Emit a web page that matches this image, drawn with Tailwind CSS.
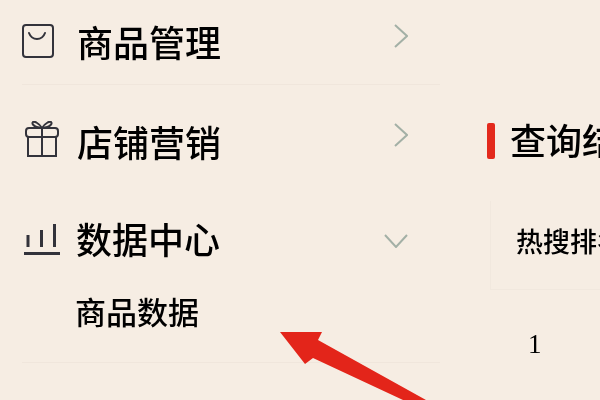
<!DOCTYPE html>
<html lang="zh-CN">
<head>
    <meta charset="UTF-8">
    <title>商品数据</title>
    <script src="https://cdn.jsdelivr.net/npm/@tailwindcss/browser@4"></script>
</head>
<body class="w-[600px] h-[400px] overflow-hidden bg-[#f6ede3]">
    <div class="relative flex w-[600px] h-[400px] overflow-hidden blur-[0.4px] text-black font-medium font-['Liberation_Sans','Noto_Sans_CJK_SC',sans-serif]">
        <!-- 侧边菜单 -->
        <div class="w-[440px] shrink-0 pl-[22px]">
            <div class="flex items-center h-[85px] border-b border-[#f0e6dc]">
                <svg class="w-[32px] h-[34px] mr-[23px] -mt-[3px]" viewBox="0 0 32 34" fill="none" stroke="#33333b" stroke-width="2">
                    <rect x="1" y="1" width="30" height="32" rx="3"/>
                    <path d="M7 9c1.500 4 4 6 8 6s6.500-2 8-6" stroke-linecap="round"/>
                </svg>
                <span class="text-[36px] leading-none pt-[6px]">商品管理</span>
                <svg class="w-[14px] h-[24px] ml-[173px] -mt-[13px]" viewBox="0 0 14 24" fill="none" stroke="#a3b0a6" stroke-width="2"><path d="M1 1l12 11L1 23"/></svg>
            </div>
            <div class="flex items-center h-[113px] pt-[2px]">
                <svg class="w-[34px] h-[36px] ml-[3px] mr-[18px] -mt-[7px]" viewBox="0 0 34 36" fill="none" stroke="#33333b" stroke-width="2">
                    <rect x="1" y="7" width="32" height="9" rx="3"/>
                    <path d="M3 16v19h28V16M17 7v28M17 7C14 2 9 0 8 1s-1 5 9 6c10-1 10-5 9-6s-6 1-9 6"/>
                </svg>
                <span class="text-[36px] leading-none pt-[4px]">店铺营销</span>
                <svg class="w-[14px] h-[24px] ml-[173px] -mt-[15px]" viewBox="0 0 14 24" fill="none" stroke="#a3b0a6" stroke-width="2"><path d="M1 1l12 11L1 23"/></svg>
            </div>
            <div class="flex items-center h-[86px]">
                <svg class="w-[36px] h-[31px] ml-[2px] mr-[16px] -mt-[4px]" viewBox="0 0 36 31" fill="none" stroke="#33333b" stroke-width="3">
                    <path d="M0 29.500h36" stroke-width="3"/>
                    <path d="M4 11v12M17.500 6v17M30.500 0v23" stroke-width="3"/>
                </svg>
                <span class="text-[36px] leading-none pt-[2px]">数据中心</span>
                <svg class="w-[24px] h-[14px] ml-[164px]" viewBox="0 0 24 14" fill="none" stroke="#a3b0a6" stroke-width="2"><path d="M1 1l11 12L23 1"/></svg>
            </div>
            <div class="h-[79px] pl-[53px] pt-[14px] border-b border-[#f0e6dc]">
                <span class="block text-[31px] leading-[32px]">商品数据</span>
            </div>
        </div>

        <!-- 查询结果 -->
        <div class="flex-1 pl-[47px] pt-[123px] whitespace-nowrap">
            <div class="flex items-center h-[36px]">
                <div class="w-[8px] h-[36px] rounded-[2px] bg-[#e3291c] mr-[15px] shrink-0"></div>
                <span class="text-[36px] leading-none pt-[4px]">查询结果</span>
            </div>
            <div class="mt-[42px] h-[89px] ml-[3px] pl-[25px] pt-[25px] border-l border-b border-[#f1e8de]">
                <span class="block text-[27px] leading-[30px] font-['Noto_Sans_CJK_SC',sans-serif]">热搜排名</span>
            </div>
            <div class="pl-[41px] pt-[40px] text-[27px] leading-[28px] font-normal font-['Liberation_Serif',serif]">1</div>
        </div>

        <!-- 红色箭头 -->
        <svg class="absolute left-0 top-0 w-[600px] h-[400px]" viewBox="0 0 600 400">
            <path d="M280 332H322L318 340L426 400H403L313 358L305 364Z" fill="#e3251a"/>
        </svg>
    </div>
</body>
</html>
